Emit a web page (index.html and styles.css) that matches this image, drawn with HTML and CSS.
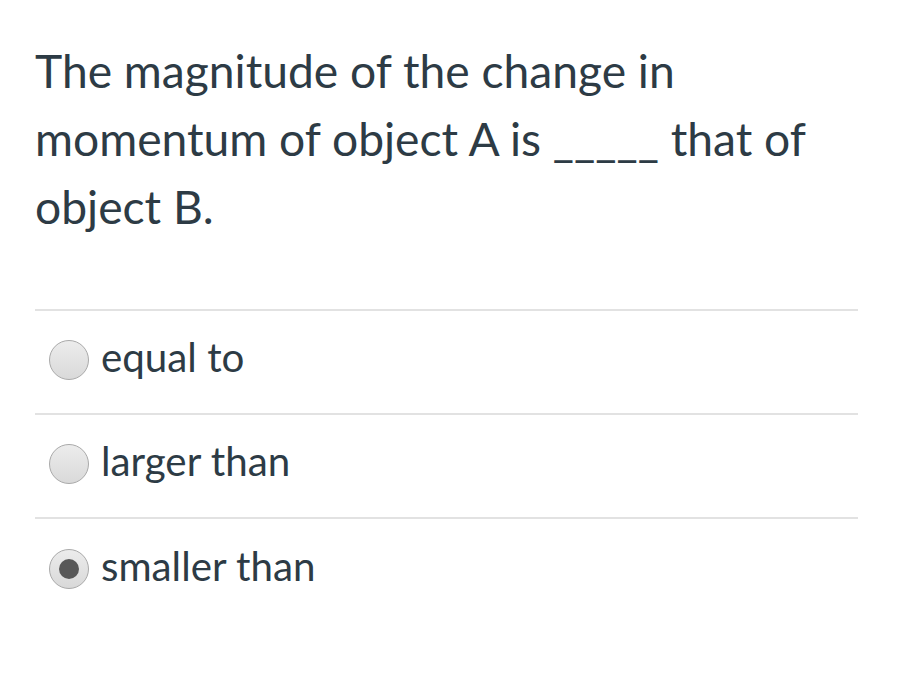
FILE: index.html
```html
<!DOCTYPE html>
<html>
<head>
<meta charset="utf-8">
<link rel="stylesheet" href="styles.css">
</head>
<body>
<div class="quiz">
  <p class="question">The magnitude of the change in momentum of object A is _____ that of object B.</p>
  <div class="answers">
    <label class="answer"><span class="radio"></span><span class="label">equal to</span></label>
    <label class="answer"><span class="radio"></span><span class="label">larger than</span></label>
    <label class="answer"><span class="radio checked"></span><span class="label">smaller than</span></label>
  </div>
</div>
</body>
</html>
```
FILE: styles.css
```css
html, body { margin: 0; padding: 0; background: #fff; }
body { font-family: Lato, "Liberation Sans", sans-serif; color: #2d3b45; }
.quiz { padding: 36px 43px 0 35px; }
.question {
  margin: 0;
  font-size: 46.2px;
  line-height: 68px;
  width: 823px;
}
.answers { margin-top: 69px; border-top: 2px solid #e2e2e2; }
.answer {
  display: flex;
  align-items: center;
  height: 104px;
  border-bottom: 2px solid #e2e2e2;
  padding-left: 14px;
  box-sizing: border-box;
}
.answer:last-child { border-bottom: none; }
.radio {
  width: 40px; height: 40px;
  border-radius: 50%;
  border: 1px solid #a9a9a9;
  background: linear-gradient(#ececec, #d9d9d9);
  box-sizing: border-box;
  display: flex; align-items: center; justify-content: center;
  margin-right: 12px;
  margin-bottom: 4px;
}
.radio.checked::after {
  content: "";
  width: 20px; height: 20px;
  border-radius: 50%;
  background: #585858;
}
.label { font-size: 40.3px; line-height: 48px; margin-bottom: 10px; }
```
